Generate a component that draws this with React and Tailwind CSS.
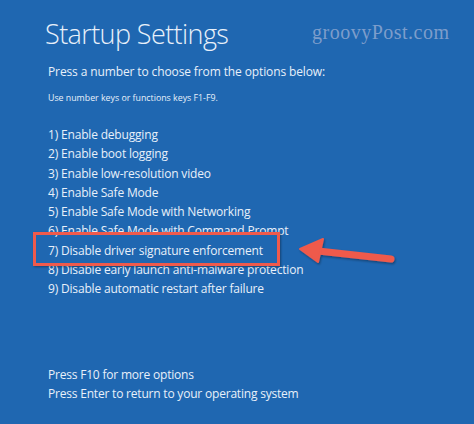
export default function App() {
  const items = [
    "1) Enable debugging",
    "2) Enable boot logging",
    "3) Enable low-resolution video",
    "4) Enable Safe Mode",
    "5) Enable Safe Mode with Networking",
    "6) Enable Safe Mode with Command Prompt",
    "7) Disable driver signature enforcement",
    "8) Disable early launch anti-malware protection",
    "9) Disable automatic restart after failure",
  ];
  return (
    <div
      className="relative w-[474px] h-[424px] overflow-hidden bg-[#1f67b1] text-[#e8f0fa]"
      style={{ fontFamily: '"Open Sans", "Noto Sans", sans-serif' }}
    >
      <div
        className="absolute left-[312px] top-[17px] text-[20px] text-[#7d9dcb] tracking-[0.5px]"
        style={{ fontFamily: '"Liberation Serif", "DejaVu Serif", serif' }}
      >
        groovyPost.com
      </div>
      <div className="flex flex-col pl-[48px] pt-[14px]">
        <div className="ml-[-3px] text-[27px] font-light leading-[40px] tracking-[-0.6px]">Startup Settings</div>
        <div className="mt-[8px] text-[12px] leading-[20px] tracking-[-0.12px]">Press a number to choose from the options below:</div>
        <div className="mt-[9px] text-[8.8px] leading-[14px]">Use number keys or functions keys F1-F9.</div>
        <div className="mt-[20px] flex flex-col tracking-[-0.18px]">
          {items.map((t) => (
            <div key={t} className="text-[12px] leading-[19.3px] whitespace-nowrap">
              {t}
            </div>
          ))}
        </div>
        <div className="mt-[66px] flex flex-col tracking-[-0.2px]">
          <div className="text-[12px] leading-[19.5px]">Press F10 for more options</div>
          <div className="text-[12px] leading-[19.5px]">Press Enter to return to your operating system</div>
        </div>
      </div>
      <div className="absolute left-[33px] top-[232px] w-[247px] h-[34px] border-[3.5px] border-[#ef5a4c] shadow-[1px_1px_2px_rgba(0,0,0,0.35)]" />
      <svg className="absolute left-0 top-0" width="474" height="424" viewBox="0 0 474 424">
        <defs>
          <filter id="sh" x="-20%" y="-50%" width="140%" height="200%">
            <feDropShadow dx="1" dy="1.5" stdDeviation="1" floodColor="#000" floodOpacity="0.35" />
          </filter>
        </defs>
        <g filter="url(#sh)" fill="#ef5a4c" stroke="#ef5a4c" strokeLinejoin="round" strokeLinecap="round">
          <line x1="318" y1="251" x2="391" y2="259" strokeWidth="7" />
          <polygon points="300,249 323,239 318,262" strokeWidth="2" />
        </g>
      </svg>
    </div>
  );
}
